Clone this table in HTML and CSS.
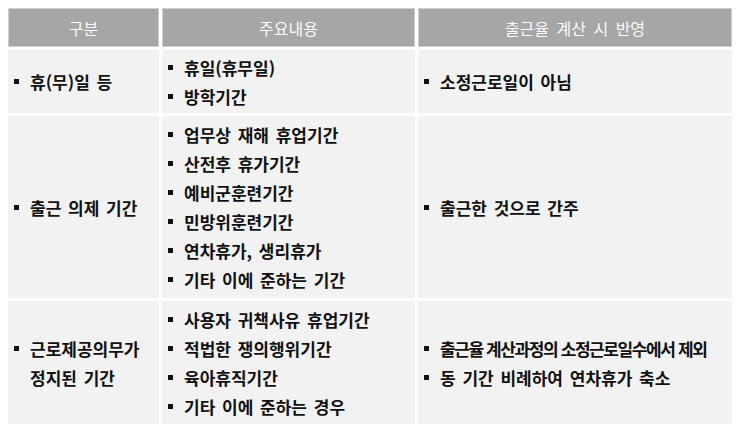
FILE: index.html
```html
<!DOCTYPE html>
<html lang="ko">
<head>
<meta charset="utf-8">
<link rel="stylesheet" href="styles.css">
</head>
<body>
<table class="tbl">
  <colgroup>
    <col class="c1"><col class="c2"><col class="c3">
  </colgroup>
  <thead>
    <tr class="head">
      <th>구분</th>
      <th>주요내용</th>
      <th>출근율 계산 시 반영</th>
    </tr>
  </thead>
  <tbody>
    <tr class="r1">
      <td><ul class="list"><li>휴(무)일 등</li></ul></td>
      <td><ul class="list"><li>휴일(휴무일)</li><li>방학기간</li></ul></td>
      <td><ul class="list"><li>소정근로일이 아님</li></ul></td>
    </tr>
    <tr class="r2">
      <td><ul class="list"><li>출근 의제 기간</li></ul></td>
      <td><ul class="list">
        <li>업무상 재해 휴업기간</li>
        <li>산전후 휴가기간</li>
        <li>예비군훈련기간</li>
        <li>민방위훈련기간</li>
        <li>연차휴가, 생리휴가</li>
        <li>기타 이에 준하는 기간</li>
      </ul></td>
      <td><ul class="list"><li>출근한 것으로 간주</li></ul></td>
    </tr>
    <tr class="r3">
      <td><ul class="list"><li>근로제공의무가<br>정지된 기간</li></ul></td>
      <td><ul class="list">
        <li>사용자 귀책사유 휴업기간</li>
        <li>적법한 쟁의행위기간</li>
        <li>육아휴직기간</li>
        <li>기타 이에 준하는 경우</li>
      </ul></td>
      <td><ul class="list">
        <li class="tight">출근율 계산과정의 소정근로일수에서 제외</li>
        <li>동 기간 비례하여 연차휴가 축소</li>
      </ul></td>
    </tr>
  </tbody>
</table>
</body>
</html>
```

FILE: styles.css
```css
html, body {
  margin: 0;
  padding: 0;
  background: #ffffff;
}
body {
  padding: 5px;
  font-family: "Noto Sans CJK KR", "Noto Sans", sans-serif;
}
.tbl {
  border-collapse: separate;
  border-spacing: 3px;
  width: 730px;
  table-layout: fixed;
}
.c1 { width: 151px; }
.c2 { width: 253px; }
.c3 { width: 314px; }
.head th {
  height: 37px;
  padding: 0;
  background: #a6a6a6;
  border: 1px solid #cfcfcf;
  color: #fbfbfb;
  font-weight: 400;
  font-size: 16px;
  word-spacing: 3px;
  text-align: center;
  vertical-align: middle;
}
td {
  background: #f2f2f2;
  padding: 0;
  vertical-align: middle;
  color: #111111;
}
.r1 td { height: 63px; }
.r2 td { height: 182px; }
.r3 td { height: 123px; }
.list {
  list-style: none;
  margin: 0;
  padding: 0;
}
.list li {
  position: relative;
  padding-left: 22px;
  font-size: 17px;
  font-weight: 700;
  line-height: 29px;
  word-spacing: 2px;
}
.list li::before {
  content: "";
  position: absolute;
  left: 6px;
  top: 12px;
  width: 5px;
  height: 5px;
  background: #111111;
}
.list li.tight {
  letter-spacing: -1.4px;
  word-spacing: 0;
}
```
